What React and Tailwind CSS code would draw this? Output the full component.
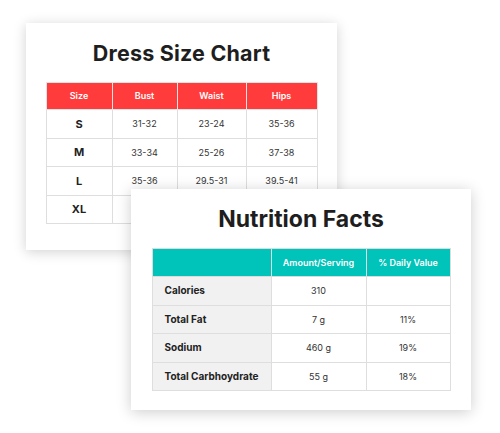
import React from 'react';

const sizeRows = [
  ['S', '31-32', '23-24', '35-36'],
  ['M', '33-34', '25-26', '37-38'],
  ['L', '35-36', '29.5-31', '39.5-41'],
  ['XL', '', '', ''],
];

const nutritionRows = [
  ['Calories', '310', ''],
  ['Total Fat', '7 g', '11%'],
  ['Sodium', '460 g', '19%'],
  ['Total Carbhoydrate', '55 g', '18%'],
];

const font = { fontFamily: 'Inter, "Open Sans", sans-serif' };

export default function App() {
  return (
    <div className="relative w-[500px] h-[433px] bg-white overflow-hidden" style={font}>
      {/* size chart card */}
      <div className="absolute left-[26px] top-[23px] w-[311px] h-[227px] bg-white shadow-[0_2px_12px_rgba(0,0,0,0.18)] flex flex-col items-center">
        <h1 className="mt-[14px] h-[32px] text-[21.5px] font-bold text-[#1e1e1e] tracking-[0.2px] leading-[32px]">Dress Size Chart</h1>
        <table className="mt-[13px] w-[271px] border-collapse table-fixed text-[9px] text-[#333]">
          <colgroup>
            <col className="w-[66px]" />
            <col className="w-[65px]" />
            <col className="w-[69px]" />
            <col className="w-[71px]" />
          </colgroup>
          <thead>
            <tr className="h-[27px] bg-[#ff3b3b] text-white">
              {['Size', 'Bust', 'Waist', 'Hips'].map((h) => (
                <th key={h} className="border border-[#e4e4e4] font-semibold">{h}</th>
              ))}
            </tr>
          </thead>
          <tbody>
            {sizeRows.map((r) => (
              <tr key={r[0]} className="h-[28.5px]">
                <td className="border border-[#dedede] text-center text-[11px] font-bold text-[#222]">{r[0]}</td>
                <td className="border border-[#dedede] text-center">{r[1]}</td>
                <td className="border border-[#dedede] text-center">{r[2]}</td>
                <td className="border border-[#dedede] text-center">{r[3]}</td>
              </tr>
            ))}
          </tbody>
        </table>
      </div>

      {/* nutrition card */}
      <div className="absolute left-[131px] top-[189px] w-[340px] h-[221px] bg-white shadow-[0_2px_14px_rgba(0,0,0,0.2)] flex flex-col items-center">
        <h2 className="mt-[14px] h-[32px] text-[23px] font-bold text-[#1e1e1e] leading-[32px]">Nutrition Facts</h2>
        <table className="mt-[13px] w-[298px] border-collapse table-fixed text-[9px] text-[#333]">
          <colgroup>
            <col className="w-[119px]" />
            <col className="w-[95px]" />
            <col className="w-[84px]" />
          </colgroup>
          <thead>
            <tr className="h-[28px] bg-[#00c3b9] text-white">
              <th className="border border-[#dcdcdc]"></th>
              <th className="border border-[#dcdcdc] font-semibold">Amount/Serving</th>
              <th className="border border-[#dcdcdc] font-semibold">% Daily Value</th>
            </tr>
          </thead>
          <tbody>
            {nutritionRows.map((r) => (
              <tr key={r[0]} className="h-[28.5px]">
                <td className="border border-[#dedede] bg-[#f1f1f1] pl-[12px] text-[10px] font-bold text-[#222]">{r[0]}</td>
                <td className="border border-[#dedede] text-center">{r[1]}</td>
                <td className="border border-[#dedede] text-center">{r[2]}</td>
              </tr>
            ))}
          </tbody>
        </table>
      </div>
    </div>
  );
}
